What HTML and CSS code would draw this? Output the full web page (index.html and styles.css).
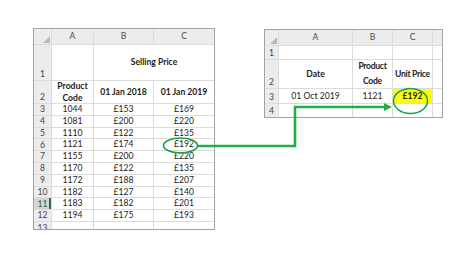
FILE: index.html
```html
<!DOCTYPE html>
<html>
<head>
<meta charset="utf-8">
<link rel="stylesheet" href="styles.css">
</head>
<body>
<div class="canvas">
  <div class="sheet sheet-left">
    <div class="hd corner"><span class="tri"></span></div>
    <div class="hd">A</div><div class="hd">B</div><div class="hd">C</div>

    <div class="rh">1</div><div class="c"></div><div class="c b span2">Selling Price</div>
    <div class="rh">2</div><div class="c b two">Product<br>Code</div><div class="c b">01 Jan 2018</div><div class="c b">01 Jan 2019</div>

    <div class="rh">3</div><div class="c">1044</div><div class="c">£153</div><div class="c">£169</div>
    <div class="rh">4</div><div class="c">1081</div><div class="c">£200</div><div class="c">£220</div>
    <div class="rh">5</div><div class="c">1110</div><div class="c">£122</div><div class="c">£135</div>
    <div class="rh">6</div><div class="c">1121</div><div class="c">£174</div><div class="c">£192</div>
    <div class="rh">7</div><div class="c">1155</div><div class="c">£200</div><div class="c">£220</div>
    <div class="rh">8</div><div class="c">1170</div><div class="c">£122</div><div class="c">£135</div>
    <div class="rh">9</div><div class="c">1172</div><div class="c">£188</div><div class="c">£207</div>
    <div class="rh">10</div><div class="c">1182</div><div class="c">£127</div><div class="c">£140</div>
    <div class="rh sel">11</div><div class="c">1183</div><div class="c">£182</div><div class="c">£201</div>
    <div class="rh">12</div><div class="c">1194</div><div class="c">£175</div><div class="c">£193</div>
    <div class="rh clip">13</div><div class="c"></div><div class="c"></div><div class="c"></div>
  </div>

  <div class="sheet sheet-right">
    <div class="hd corner"><span class="tri"></span></div>
    <div class="hd">A</div><div class="hd">B</div><div class="hd">C</div><div class="hd"></div>

    <div class="rh">1</div><div class="c"></div><div class="c"></div><div class="c"></div><div class="c"></div>
    <div class="rh">2</div><div class="c b">Date</div><div class="c b two-wide tight">Product<br>Code</div><div class="c b tight">Unit Price</div><div class="c"></div>
    <div class="rh">3</div><div class="c">01 Oct 2019</div><div class="c">1121</div><div class="c b yellow">£192</div><div class="c"></div>
    <div class="rh">4</div><div class="c"></div><div class="c"></div><div class="c"></div><div class="c"></div>
  </div>

  <svg class="overlay" width="474" height="272" viewBox="0 0 474 272">
    <ellipse cx="180.5" cy="145.5" rx="17" ry="7.5" fill="none" stroke="#1f9e4a" stroke-width="1.6"/>
    <ellipse cx="410.5" cy="101" rx="17" ry="12.5" fill="none" stroke="#1f9e4a" stroke-width="1.5"/>
    <polyline points="198,146 295,146 295,107 385,107" fill="none" stroke="#1fae4b" stroke-width="2.6"/>
    <polygon points="384,103 392,107 384,111" fill="#1fae4b"/>
  </svg>
</div>
</body>
</html>
```

FILE: styles.css
```css
html, body {
  margin: 0;
  padding: 0;
  background: #ffffff;
}

.canvas {
  position: relative;
  width: 474px;
  height: 272px;
  box-sizing: border-box;
  padding: 28px 0 0 33px;
  display: flex;
  align-items: flex-start;
  gap: 49px;
  overflow: hidden;
}

.sheet {
  display: grid;
  gap: 1px;
  background: #dcdcdc;
  border: 1px solid #a3a3a3;
  font-family: Lato, "Open Sans", "DejaVu Sans", sans-serif;
  font-size: 8.6px;
  line-height: 1;
  color: #222222;
}

.sheet-left {
  grid-template-columns: 17px 41px 59px 60px;
  grid-template-rows: 15px 35px 22px repeat(10, 10.8px) 7px;
}

.sheet-right {
  margin-top: 1px;
  grid-template-columns: 13px 73px 39px 39px 9px;
  grid-template-rows: 15px 13px 28px 14px 13px;
}

.c {
  background: #ffffff;
  display: flex;
  align-items: center;
  justify-content: center;
  white-space: nowrap;
  text-align: center;
}

.b {
  font-weight: 700;
}

.tight {
  letter-spacing: -0.3px;
}

.span2 {
  grid-column: span 2;
}

.two {
  line-height: 12px;
}

.two-wide {
  line-height: 15px;
}

.yellow {
  background: #ffff00;
}

.hd {
  background: #ececec;
  color: #4a4a4a;
  display: flex;
  align-items: center;
  justify-content: center;
}

.corner {
  align-items: flex-end;
  justify-content: flex-end;
  padding: 0 1px 1px 0;
}

.tri {
  width: 0;
  height: 0;
  border-left: 7px solid transparent;
  border-bottom: 7px solid #b9b9b9;
}

.rh {
  background: #ececec;
  color: #444444;
  display: flex;
  align-items: flex-end;
  justify-content: center;
  padding-bottom: 1px;
  box-sizing: border-box;
}

.rh.sel {
  background: #d4d4d4;
  box-shadow: inset -2px 0 0 #217346;
  color: #2d5d3e;
}

.rh.clip {
  align-items: flex-start;
  padding: 2px 0 0 0;
  overflow: hidden;
}

.overlay {
  position: absolute;
  left: 0;
  top: 0;
  pointer-events: none;
}
```
